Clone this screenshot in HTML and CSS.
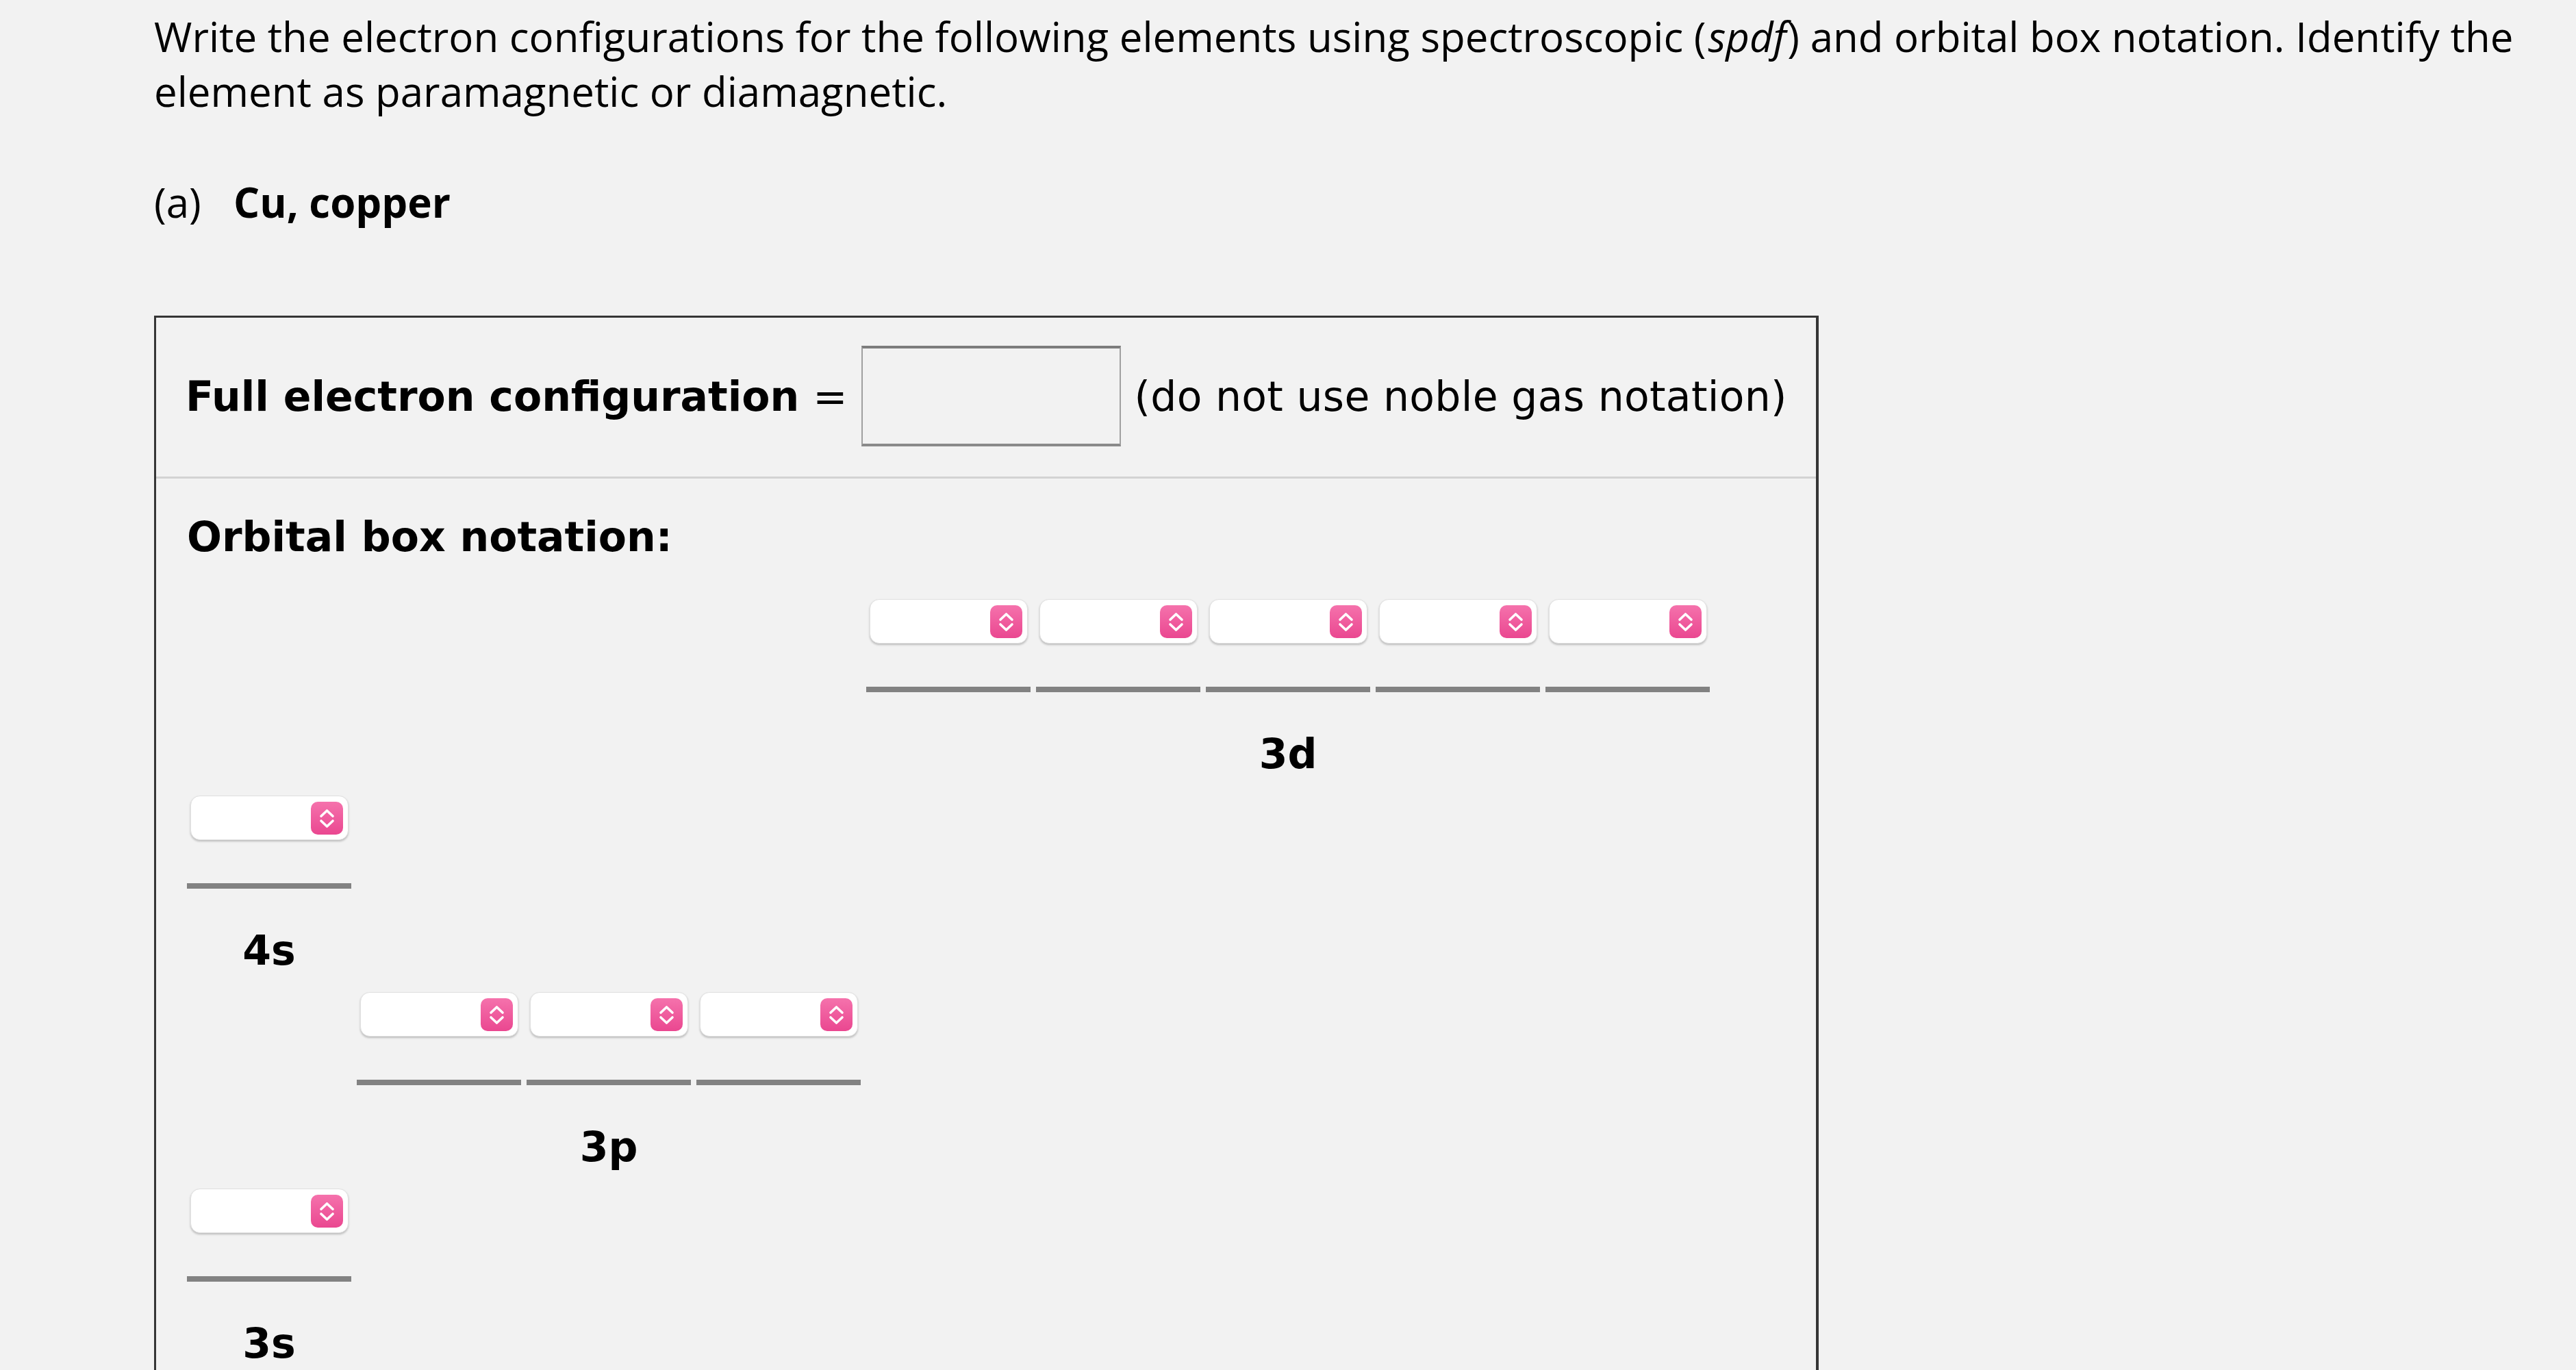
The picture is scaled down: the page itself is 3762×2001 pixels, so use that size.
FILE: index.html
```html
<!DOCTYPE html>
<html lang="en">
<head>
<meta charset="utf-8">
<title>Electron configurations</title>
<link rel="stylesheet" href="styles.css">
</head>
<body>
<main class="page">
  <p class="intro">Write the electron configurations for the following elements using spectroscopic <span class="spdf">(<i>spdf</i>)</span> and orbital box notation. Identify the element as paramagnetic or diamagnetic.</p>
  <p class="part"><span class="part-label">(a)</span><b>Cu, copper</b></p>

  <section class="qbox">
    <div class="row-config">
      <span class="cfg-label">Full electron configuration</span>
      <span class="eq">=</span>
      <input class="cfg-input" type="text" aria-label="Full electron configuration">
      <span class="cfg-note">(do not use noble gas notation)</span>
    </div>

    <div class="row-orbitals">
      <div class="orb-title">Orbital box notation:</div>
      <div class="diagram">
        <div class="sub sub-3d">
          <div class="cells">
            <div class="cell"><div class="dd"><span class="dd-btn"><svg viewBox="0 0 47 48" width="47" height="48"><path d="M15 21 L23.5 13 L32 21 M15 28 L23.5 36 L32 28" fill="none" stroke="#fff" stroke-width="3.6" stroke-linecap="round" stroke-linejoin="round"/></svg></span></div><div class="orb-line"></div></div>
            <div class="cell"><div class="dd"><span class="dd-btn"><svg viewBox="0 0 47 48" width="47" height="48"><path d="M15 21 L23.5 13 L32 21 M15 28 L23.5 36 L32 28" fill="none" stroke="#fff" stroke-width="3.6" stroke-linecap="round" stroke-linejoin="round"/></svg></span></div><div class="orb-line"></div></div>
            <div class="cell"><div class="dd"><span class="dd-btn"><svg viewBox="0 0 47 48" width="47" height="48"><path d="M15 21 L23.5 13 L32 21 M15 28 L23.5 36 L32 28" fill="none" stroke="#fff" stroke-width="3.6" stroke-linecap="round" stroke-linejoin="round"/></svg></span></div><div class="orb-line"></div></div>
            <div class="cell"><div class="dd"><span class="dd-btn"><svg viewBox="0 0 47 48" width="47" height="48"><path d="M15 21 L23.5 13 L32 21 M15 28 L23.5 36 L32 28" fill="none" stroke="#fff" stroke-width="3.6" stroke-linecap="round" stroke-linejoin="round"/></svg></span></div><div class="orb-line"></div></div>
            <div class="cell"><div class="dd"><span class="dd-btn"><svg viewBox="0 0 47 48" width="47" height="48"><path d="M15 21 L23.5 13 L32 21 M15 28 L23.5 36 L32 28" fill="none" stroke="#fff" stroke-width="3.6" stroke-linecap="round" stroke-linejoin="round"/></svg></span></div><div class="orb-line"></div></div>
          </div>
          <div class="sub-label">3d</div>
        </div>

        <div class="sub sub-4s">
          <div class="cells">
            <div class="cell"><div class="dd"><span class="dd-btn"><svg viewBox="0 0 47 48" width="47" height="48"><path d="M15 21 L23.5 13 L32 21 M15 28 L23.5 36 L32 28" fill="none" stroke="#fff" stroke-width="3.6" stroke-linecap="round" stroke-linejoin="round"/></svg></span></div><div class="orb-line"></div></div>
          </div>
          <div class="sub-label">4s</div>
        </div>

        <div class="sub sub-3p">
          <div class="cells">
            <div class="cell"><div class="dd"><span class="dd-btn"><svg viewBox="0 0 47 48" width="47" height="48"><path d="M15 21 L23.5 13 L32 21 M15 28 L23.5 36 L32 28" fill="none" stroke="#fff" stroke-width="3.6" stroke-linecap="round" stroke-linejoin="round"/></svg></span></div><div class="orb-line"></div></div>
            <div class="cell"><div class="dd"><span class="dd-btn"><svg viewBox="0 0 47 48" width="47" height="48"><path d="M15 21 L23.5 13 L32 21 M15 28 L23.5 36 L32 28" fill="none" stroke="#fff" stroke-width="3.6" stroke-linecap="round" stroke-linejoin="round"/></svg></span></div><div class="orb-line"></div></div>
            <div class="cell"><div class="dd"><span class="dd-btn"><svg viewBox="0 0 47 48" width="47" height="48"><path d="M15 21 L23.5 13 L32 21 M15 28 L23.5 36 L32 28" fill="none" stroke="#fff" stroke-width="3.6" stroke-linecap="round" stroke-linejoin="round"/></svg></span></div><div class="orb-line"></div></div>
          </div>
          <div class="sub-label">3p</div>
        </div>

        <div class="sub sub-3s">
          <div class="cells">
            <div class="cell"><div class="dd"><span class="dd-btn"><svg viewBox="0 0 47 48" width="47" height="48"><path d="M15 21 L23.5 13 L32 21 M15 28 L23.5 36 L32 28" fill="none" stroke="#fff" stroke-width="3.6" stroke-linecap="round" stroke-linejoin="round"/></svg></span></div><div class="orb-line"></div></div>
          </div>
          <div class="sub-label">3s</div>
        </div>
      </div>
    </div>
  </section>
</main>
</body>
</html>
```
FILE: styles.css
```css
html, body {
  margin: 0;
  padding: 0;
  background: #f2f2f2;
  color: #000;
}

.page {
  padding: 13px 30px 0 225px;
}

.intro {
  margin: 0;
  font-family: "Open Sans", "Noto Sans", sans-serif;
  font-size: 60px;
  line-height: 80px;
}

.spdf {
  white-space: nowrap;
}

.spdf i {
  padding: 0 2px 0 3px;
}

.part {
  margin: 82px 0 0;
  font-family: "Open Sans", "Noto Sans", sans-serif;
  font-size: 60px;
  line-height: 80px;
}

.part-label {
  display: inline-block;
  width: 116px;
}

.part b {
  font-weight: 700;
}

.qbox {
  margin-top: 126px;
  width: 2431px;
  box-sizing: border-box;
  border: 3px solid #363636;
  border-right-width: 4px;
  padding-bottom: 400px;
  font-family: "DejaVu Sans", Verdana, sans-serif;
  font-size: 60px;
  line-height: 72px;
}

.row-config {
  display: flex;
  align-items: center;
  gap: 20px;
  padding: 41px 10px 44px 43px;
  border-bottom: 3px solid #d3d3d3;
  white-space: nowrap;
}

.row-config > * {
  flex-shrink: 0;
}

.cfg-label {
  font-weight: 700;
}

.cfg-note {
  letter-spacing: 0.3px;
}

.cfg-input {
  width: 379px;
  height: 147px;
  box-sizing: border-box;
  margin: 0;
  padding: 0;
  background: transparent;
  border: 2px solid #a0a0a0;
  border-top: 4px solid #7d7d7d;
  border-bottom: 4px solid #8a8a8a;
}

.row-orbitals {
  padding: 49px 0 0 45px;
}

.orb-title {
  font-weight: 700;
}

.diagram {
  display: grid;
  grid-template-columns: repeat(9, 240px);
  column-gap: 8px;
  grid-auto-rows: 287px;
  margin-top: 55px;
}

.sub-3d { grid-column: 5 / span 5; grid-row: 1; }
.sub-4s { grid-column: 1; grid-row: 2; }
.sub-3p { grid-column: 2 / span 3; grid-row: 3; }
.sub-3s { grid-column: 1; grid-row: 4; }

.cells {
  display: flex;
  gap: 8px;
}

.cell {
  width: 240px;
  display: flex;
  flex-direction: column;
  align-items: center;
}

.dd {
  width: 231px;
  height: 65px;
  box-sizing: border-box;
  background: #fff;
  border: 1px solid #e0e0e0;
  border-radius: 14px;
  box-shadow: 0 2px 3px rgba(0, 0, 0, 0.22);
  display: flex;
  justify-content: flex-end;
  align-items: center;
  padding-right: 7px;
}

.dd-btn {
  width: 47px;
  height: 48px;
  border-radius: 10px;
  background: linear-gradient(#f572ac, #ea4790);
  display: flex;
}

.orb-line {
  width: 240px;
  height: 8px;
  background: #828282;
  margin-top: 63px;
}

.sub-label {
  text-align: center;
  font-weight: 700;
  margin-top: 54px;
}
```
